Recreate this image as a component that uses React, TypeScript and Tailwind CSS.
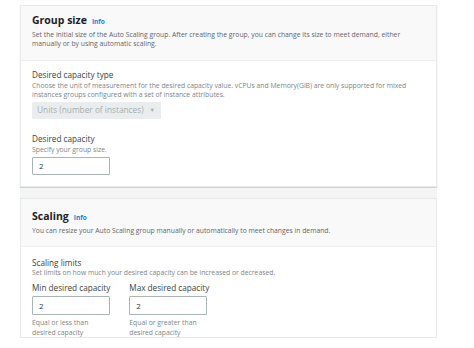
const font = { fontFamily: '"Open Sans", "Liberation Sans", sans-serif' };

function Info() {
  return <span className="ml-[5px] text-[6.5px] font-bold text-[#1a7fc4]">Info</span>;
}

function NumInput({ value }: { value: string }) {
  return (
    <div className="w-[78px] border border-[#a9b4b5] bg-white rounded-[1px] flex items-center px-[6px] text-[8px] text-[#33373a]">
      {value}
    </div>
  );
}

function Hint({ children }: { children: React.ReactNode }) {
  return <div className="text-[6.8px] leading-[9px] text-[#7d8589]">{children}</div>;
}

export default function App() {
  return (
    <div className="w-[474px] h-[348px] bg-white overflow-hidden" style={font}>
      <div className="pl-[20px] pt-[5px] w-[437px] flex flex-col">
        {/* Group size */}
        <div className="border border-[#e6e9e9] shadow-[0_1px_1px_rgba(0,0,0,0.18)] bg-white">
          <div className="bg-[#f9f9f9] h-[55px] px-[11px] pt-[7px] border-b border-[#efefef]">
            <div className="flex items-baseline">
              <span className="text-[10.5px] leading-[15px] font-bold text-[#1d2125]">Group size</span>
              <Info />
            </div>
            <div className="text-[6.8px] leading-[9px] text-[#5f666b] mt-[2px] pr-[18px]">
              Set the initial size of the Auto Scaling group. After creating the group, you can change its size to meet demand, either manually or by using automatic scaling.
            </div>
          </div>
          <div className="px-[11px] pt-[8px] pb-[11px] flex flex-col">
            <div className="text-[8.2px] leading-[12px] text-[#3b3f42]">Desired capacity type</div>
            <div className="pr-[18px]">
              <Hint>
                Choose the unit of measurement for the desired capacity value. vCPUs and Memory(GiB) are only supported for mixed instances groups configured with a set of instance attributes.
              </Hint>
            </div>
            <div className="mt-[3px] w-[129px] h-[17px] bg-[#eaeded] rounded-[1px] flex items-center justify-between pl-[5px] pr-[6px] text-[8.3px] text-[#a4aeb0] whitespace-nowrap">
              <span>Units (number of instances)</span>
              <span className="text-[5.5px] shrink-0">▼</span>
            </div>
            <div className="text-[8.2px] leading-[12px] text-[#3b3f42] mt-[14px]">Desired capacity</div>
            <Hint>Specify your group size.</Hint>
            <div className="mt-[3px] h-[18px] flex">
              <NumInput value="2" />
            </div>
          </div>
        </div>

        <div className="h-[10px] bg-[#f4f4f4] mt-[1px]" />

        {/* Scaling */}
        <div className="border border-[#e6e9e9] bg-white">
          <div className="bg-[#f9f9f9] h-[48px] px-[11px] pt-[10px] border-b border-[#efefef]">
            <div className="flex items-baseline">
              <span className="text-[10.5px] leading-[15px] font-bold text-[#1d2125]">Scaling</span>
              <Info />
            </div>
            <div className="text-[6.8px] leading-[9px] text-[#5f666b] mt-[2px]">
              You can resize your Auto Scaling group manually or automatically to meet changes in demand.
            </div>
          </div>
          <div className="px-[11px] pt-[10px] flex flex-col">
            <div className="text-[8.2px] leading-[11px] text-[#3b3f42]">Scaling limits</div>
            <Hint>Set limits on how much your desired capacity can be increased or decreased.</Hint>
            <div className="flex gap-[19px] mt-[5px]">
              <div className="flex flex-col">
                <div className="text-[8.2px] leading-[12px] text-[#3b3f42] mb-[2px]">Min desired capacity</div>
                <div className="h-[19px] flex">
                  <NumInput value="2" />
                </div>
                <div className="mt-[3px] text-[6.8px] leading-[9.5px] text-[#7d8589]">Equal or less than<br />desired capacity</div>
              </div>
              <div className="flex flex-col">
                <div className="text-[8.2px] leading-[12px] text-[#3b3f42] mb-[2px]">Max desired capacity</div>
                <div className="h-[19px] flex">
                  <NumInput value="2" />
                </div>
                <div className="mt-[3px] text-[6.8px] leading-[9.5px] text-[#7d8589]">Equal or greater than<br />desired capacity</div>
              </div>
            </div>
          </div>
        </div>
      </div>
    </div>
  );
}
